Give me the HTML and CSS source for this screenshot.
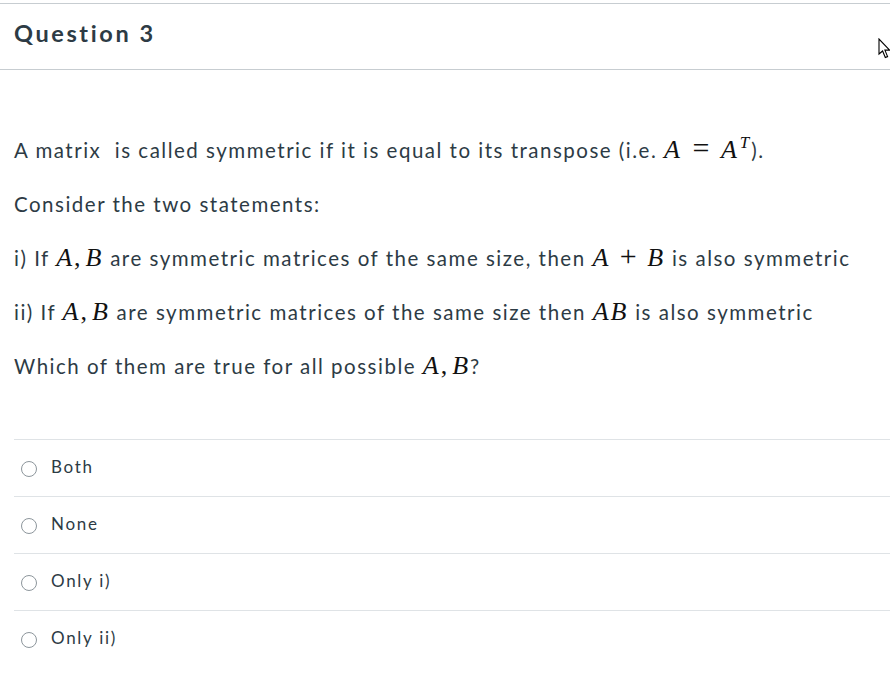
FILE: index.html
```html
<!DOCTYPE html>
<html>
<head>
<meta charset="utf-8">
<link rel="stylesheet" href="styles.css">
</head>
<body>
<div class="question">
  <div class="header">
    <h2 class="title">Question 3</h2>
  </div>
  <div class="body">
    <p>A matrix &nbsp;is called symmetric if it is equal to its transpose (i.e. <span class="m"><i>A</i><span class="op eq">=</span><i>A</i><sup><i>T</i></sup></span>).</p>
    <p>Consider the two statements:</p>
    <p>i) If <span class="m"><i>A</i><span class="comma">,</span><i>B</i></span> are symmetric matrices of the same size, then <span class="m"><i>A</i><span class="op">+</span><i>B</i></span> is also symmetric</p>
    <p>ii) If <span class="m"><i>A</i><span class="comma">,</span><i>B</i></span> are symmetric matrices of the same size then <span class="m"><i>AB</i></span> is also symmetric</p>
    <p>Which of them are true for all possible <span class="m"><i>A</i><span class="comma">,</span><i>B</i></span>?</p>
  </div>
  <div class="answers">
    <div class="answer"><span class="radio"></span><span>Both</span></div>
    <div class="answer"><span class="radio"></span><span>None</span></div>
    <div class="answer"><span class="radio"></span><span>Only i)</span></div>
    <div class="answer"><span class="radio"></span><span>Only ii)</span></div>
  </div>
  <svg class="cursor" width="13" height="21" viewBox="0 0 13 21">
    <path d="M1 1 L1 16 L4.6 13 L7.3 19.5 L9.6 18.6 L6.9 12.1 L11.6 12.1 Z" fill="#fff" stroke="#000" stroke-width="1.1" stroke-linejoin="miter"/>
  </svg>
</div>
</body>
</html>
```
FILE: styles.css
```css
html, body {
  margin: 0;
  padding: 0;
  background: #fff;
}
body {
  font-family: Lato, "Open Sans", sans-serif;
  color: #2d3b45;
}
.question {
  position: relative;
  margin-top: 3px;
  border-top: 1px solid #c7cdd1;
}
.header {
  height: 65px;
  border-bottom: 1px solid #c7cdd1;
  display: flex;
  align-items: center;
  padding-left: 14px;
}
.title {
  margin: 0 0 7px 0;
  font-size: 23.5px;
  font-weight: 700;
  letter-spacing: 2.6px;
  color: #2d3b45;
}
.body {
  padding: 66px 14px 0 14px;
  display: flex;
  flex-direction: column;
  gap: 26px;
}
.body p {
  margin: 0;
  font-size: 20.5px;
  line-height: 28px;
  letter-spacing: 1.5px;
  white-space: nowrap;
}
.m {
  font-family: "Liberation Serif", "DejaVu Serif", serif;
  font-size: 26px;
  letter-spacing: 2px;
  color: #111;
}
.m i {
  font-style: italic;
}
.op {
  display: inline-block;
  width: 22px;
  text-align: center;
  margin: 0 8px 0 7px;
  font-size: 30px;
  line-height: 20px;
  font-style: normal;
  letter-spacing: 0;
}
.op.eq {
  margin: 0 9px 0 8px;
}
.comma {
  margin-right: 5px;
  letter-spacing: 0;
}
.m sup {
  font-size: 17px;
  vertical-align: 10px;
  line-height: 0;
  margin-left: 1px;
}
.answers {
  margin: 59px 0 0 14px;
}
.answer {
  height: 52px;
  padding-bottom: 4px;
  border-top: 1px solid #dfe3e6;
  display: flex;
  align-items: center;
  font-size: 17px;
  letter-spacing: 1.7px;
  color: #2d3b45;
}
.radio {
  width: 16px;
  height: 16px;
  border: 1.5px solid #8d969c;
  border-radius: 50%;
  box-sizing: border-box;
  margin: 5px 14px 0 7px;
}
.cursor {
  position: absolute;
  left: 878px;
  top: 34px;
}
```
